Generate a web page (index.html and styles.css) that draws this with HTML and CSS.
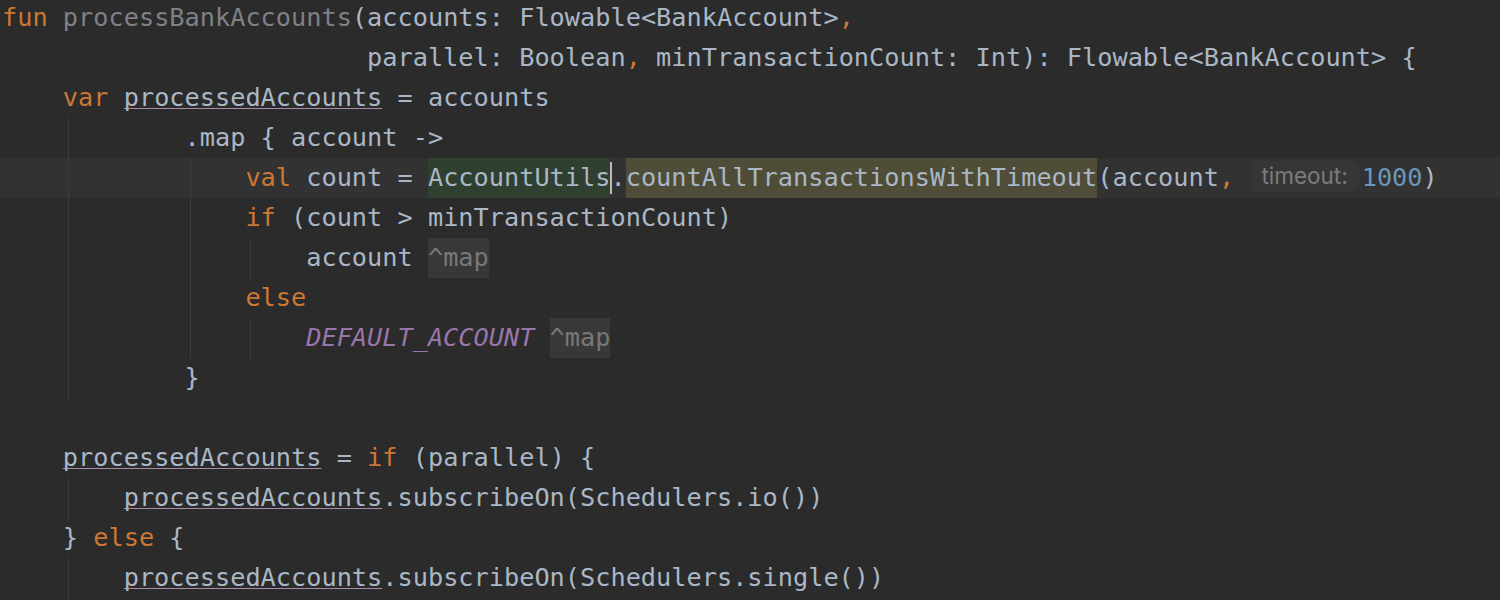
FILE: index.html
```html
<!DOCTYPE html>
<html>
<head>
<meta charset="utf-8">
<link rel="stylesheet" href="styles.css">
</head>
<body>
<div class="editor">
  <div class="line"><span class="kw">fun</span> <span class="unused">processBankAccounts</span>(accounts: Flowable&lt;BankAccount&gt;<span class="kw">,</span></div>
  <div class="line">                        parallel: Boolean<span class="kw">,</span> minTransactionCount: Int): Flowable&lt;BankAccount&gt; {</div>
  <div class="line">    <span class="kw">var</span> <span class="mut">processedAccounts</span> = accounts</div>
  <div class="line"><span class="ind"></span><span class="ind g"></span><span class="ind"></span>.map { account -&gt;</div>
  <div class="line current"><span class="ind"></span><span class="ind g"></span><span class="ind"></span><span class="ind g"></span><span class="kw">val</span> count = <span class="hl-read">AccountUtils</span><span class="caret"></span>.<span class="hl-ident">countAllTransactionsWithTimeout</span>(account<span class="kw">,</span> <span class="hint">timeout:</span><span class="num">1000</span>)</div>
  <div class="line"><span class="ind"></span><span class="ind g"></span><span class="ind"></span><span class="ind g"></span><span class="kw">if</span> (count &gt; minTransactionCount)</div>
  <div class="line"><span class="ind"></span><span class="ind g"></span><span class="ind"></span><span class="ind g"></span><span class="ind g"></span>account <span class="label">^map</span></div>
  <div class="line"><span class="ind"></span><span class="ind g"></span><span class="ind"></span><span class="ind g"></span><span class="kw">else</span></div>
  <div class="line"><span class="ind"></span><span class="ind g"></span><span class="ind"></span><span class="ind g"></span><span class="ind g"></span><span class="const">DEFAULT_ACCOUNT</span> <span class="label">^map</span></div>
  <div class="line"><span class="ind"></span><span class="ind g"></span><span class="ind"></span>}</div>
  <div class="line"></div>
  <div class="line">    <span class="mut">processedAccounts</span> = <span class="kw">if</span> (parallel) {</div>
  <div class="line"><span class="ind"></span><span class="ind g"></span><span class="mut">processedAccounts</span>.subscribeOn(Schedulers.io())</div>
  <div class="line">    } <span class="kw">else</span> {</div>
  <div class="line"><span class="ind"></span><span class="ind g"></span><span class="mut">processedAccounts</span>.subscribeOn(Schedulers.single())</div>
</div>
</body>
</html>
```

FILE: styles.css
```css
html, body {
  margin: 0;
  padding: 0;
  background: #2b2b2b;
}
body {
  height: 600px;
  overflow: hidden;
}
.editor {
  margin-top: -2px;
  font-family: "DejaVu Sans Mono", monospace;
  font-size: 25.28px;
  color: #a9b7c6;
}
.line {
  height: 40px;
  line-height: 40px;
  padding-left: 2px;
  white-space: pre;
}
.current {
  background: #323232;
}
.ind {
  display: inline-block;
  width: 4ch;
  height: 40px;
  vertical-align: top;
}
.ind.g {
  background: linear-gradient(#3d3d3d, #3d3d3d) 5px 0 / 1px 100% no-repeat;
}
.kw {
  color: #cc7832;
}
.unused {
  color: #7f8188;
}
.mut {
  text-decoration: underline 1px #a58bad;
  text-underline-offset: 2px;
  text-decoration-skip-ink: none;
}
.const {
  color: #9876aa;
  font-style: italic;
}
.num {
  color: #6897bb;
}
.hl-read {
  display: inline-block;
  height: 40px;
  vertical-align: top;
  background: #2f3f30;
}
.hl-ident {
  display: inline-block;
  height: 40px;
  vertical-align: top;
  background: #4f4d37;
}
.caret {
  display: inline-block;
  width: 0;
  height: 32px;
  margin-top: 4px;
  vertical-align: top;
  border-left: 2px solid #bbbbbb;
  margin-right: -2px;
}
.label {
  display: inline-block;
  height: 40px;
  vertical-align: top;
  background: #383838;
  color: #787878;
}
.hint {
  display: inline-block;
  height: 30px;
  margin: 3px 3px 0 3px;
  padding: 0 11px 0 9px;
  vertical-align: top;
  line-height: 30px;
  border-radius: 6px;
  background: #363636;
  color: #7c7c7c;
  font-family: "Inter", "Noto Sans", sans-serif;
  font-size: 22.5px;
}
```
